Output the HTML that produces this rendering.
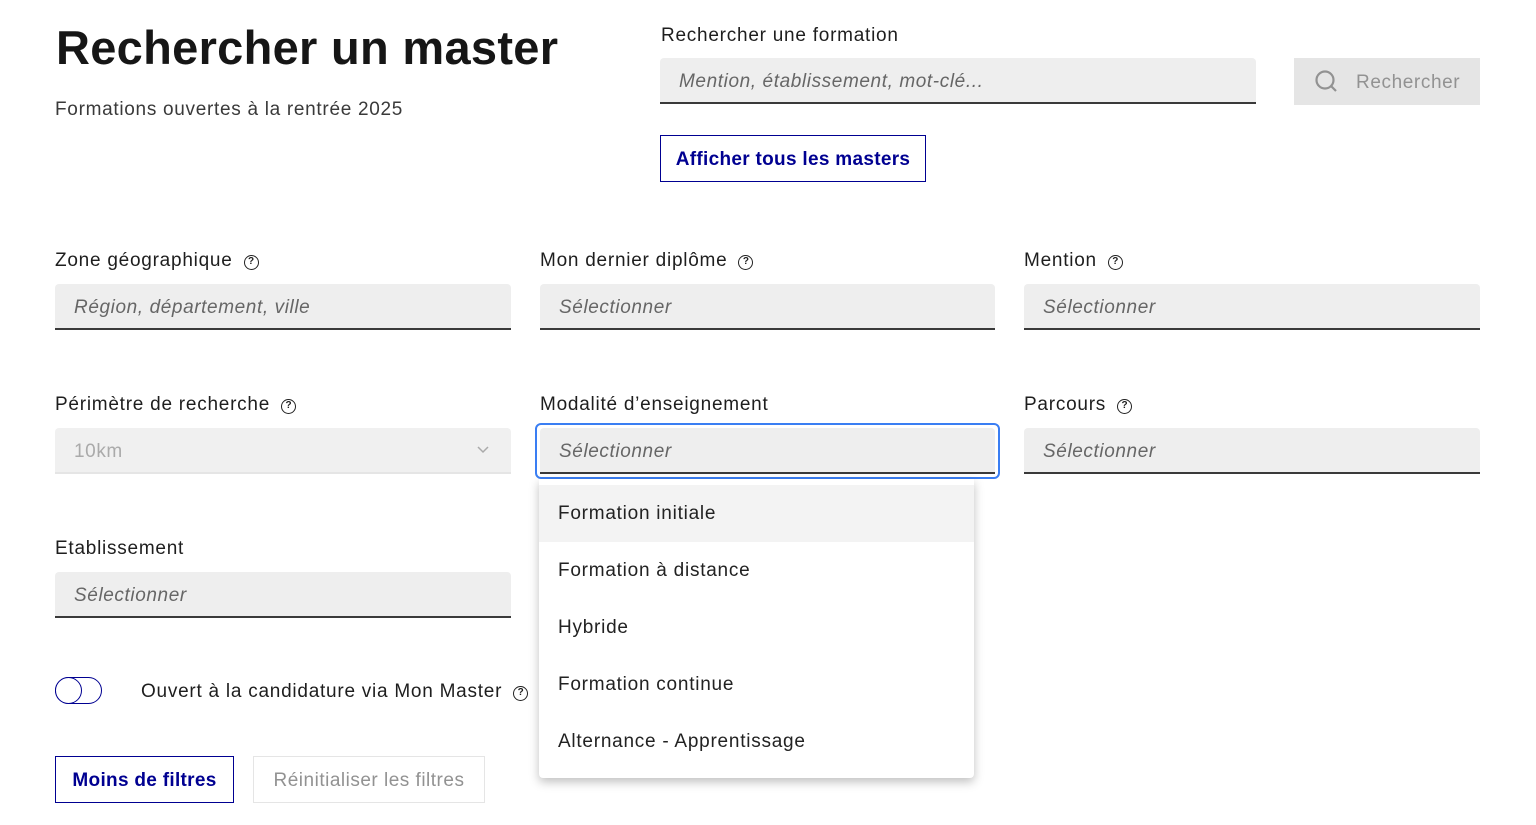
<!DOCTYPE html>
<html><head><meta charset="utf-8"><style>
*{box-sizing:border-box;margin:0;padding:0}
body{width:1536px;height:825px;background:#fff;font-family:"Liberation Sans",sans-serif;color:#161616;position:relative;overflow:hidden}
.a{position:absolute}
.lbl{font-size:19px;color:#1e1e1e;white-space:nowrap;letter-spacing:.75px}
.inp{background:#eee;border-bottom:2px solid #3a3a3a;border-radius:4px 4px 0 0;font-size:19px;font-style:italic;color:#666;padding-left:19px;line-height:47px;height:46px;letter-spacing:.6px}
.q{display:inline-block;width:15px;height:15px;border:1.6px solid #222;border-radius:50%;font-size:10px;font-weight:bold;text-align:center;line-height:12px;font-style:normal;vertical-align:2px;margin-left:11px;letter-spacing:0}
.it{position:absolute;left:0;width:435px;height:57px;line-height:58px;padding-left:19px;font-size:19px;color:#222;letter-spacing:.75px}
</style></head><body>
<div class="a" style="left:56px;top:20px;font-size:47px;font-weight:bold;color:#161616;letter-spacing:.3px">Rechercher un master</div>
<div class="a" style="left:55px;top:99px;font-size:19px;color:#3a3a3a;letter-spacing:.7px">Formations ouvertes à la rentrée 2025</div>
<div class="a lbl" style="left:661px;top:25px">Rechercher une formation</div>
<div class="a inp" style="left:660px;top:58px;width:596px">Mention, établissement, mot-clé...</div>
<div class="a" style="left:1294px;top:58px;width:186px;height:47px;background:#e5e5e5;color:#929292;font-size:19px;line-height:49px;letter-spacing:.6px">
<svg class="a" style="left:20px;top:11px" width="26" height="26" viewBox="0 0 26 26"><circle cx="11" cy="11" r="8.5" fill="none" stroke="#929292" stroke-width="2.2"/><path d="M17 17l5 5" stroke="#929292" stroke-width="2.2"/></svg>
<span class="a" style="left:62px">Rechercher</span></div>
<div class="a" style="left:660px;top:135px;width:266px;height:47px;border:1px solid #000091;color:#000091;font-size:19px;font-weight:bold;line-height:47px;text-align:center;letter-spacing:.3px">Afficher tous les masters</div>

<div class="a lbl" style="left:55px;top:250px">Zone géographique<span class="q">?</span></div>
<div class="a lbl" style="left:540px;top:250px">Mon dernier diplôme<span class="q">?</span></div>
<div class="a lbl" style="left:1024px;top:250px">Mention<span class="q">?</span></div>
<div class="a inp" style="left:55px;top:284px;width:456px">Région, département, ville</div>
<div class="a inp" style="left:540px;top:284px;width:455px">Sélectionner</div>
<div class="a inp" style="left:1024px;top:284px;width:456px">Sélectionner</div>

<div class="a lbl" style="left:55px;top:394px">Périmètre de recherche<span class="q">?</span></div>
<div class="a lbl" style="left:540px;top:394px">Modalité d’enseignement</div>
<div class="a lbl" style="left:1024px;top:394px">Parcours<span class="q">?</span></div>
<div class="a inp" style="left:55px;top:428px;width:456px;background:#f0f0f0;border-bottom-color:#e5e5e5;font-style:normal;color:#aaa">10km
<svg class="a" style="left:422px;top:18px" width="12" height="8" viewBox="0 0 12 8"><path d="M1 1l5 5 5-5" fill="none" stroke="#aaa" stroke-width="1.5"/></svg></div>
<div class="a" style="left:535px;top:423px;width:465px;height:56px;border:2px solid #3a7ef3;border-radius:6px"></div>
<div class="a inp" style="left:540px;top:428px;width:455px">Sélectionner</div>
<div class="a inp" style="left:1024px;top:428px;width:456px">Sélectionner</div>

<div class="a lbl" style="left:55px;top:538px">Etablissement</div>
<div class="a inp" style="left:55px;top:572px;width:456px">Sélectionner</div>

<div class="a" style="left:539px;top:479px;width:435px;height:299px;background:#fff;box-shadow:0 4px 10px rgba(0,0,0,.25);border-radius:0 0 4px 4px">
<div class="it" style="top:6px;background:#f3f3f3">Formation initiale</div>
<div class="it" style="top:63px">Formation à distance</div>
<div class="it" style="top:120px">Hybride</div>
<div class="it" style="top:177px">Formation continue</div>
<div class="it" style="top:234px">Alternance - Apprentissage</div>
</div>

<div class="a" style="left:55px;top:677px;width:47px;height:27px;border:1.5px solid #000091;border-radius:14px"></div>
<div class="a" style="left:55px;top:677px;width:27px;height:27px;border:1.5px solid #000091;border-radius:50%;background:#fff"></div>
<div class="a lbl" style="left:141px;top:681px">Ouvert à la candidature via Mon Master<span class="q" style="margin-left:11px">?</span></div>

<div class="a" style="left:55px;top:756px;width:179px;height:47px;border:1px solid #000091;color:#000091;font-size:19px;font-weight:bold;line-height:47px;text-align:center;letter-spacing:.3px">Moins de filtres</div>
<div class="a" style="left:253px;top:756px;width:232px;height:47px;border:1px solid #e5e5e5;color:#929292;font-size:19px;line-height:47px;text-align:center;letter-spacing:.5px">Réinitialiser les filtres</div>
</body></html>
